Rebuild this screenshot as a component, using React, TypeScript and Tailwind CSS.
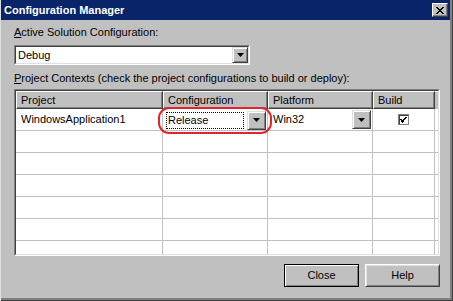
import React from "react";

function DropArrow() {
  return (
    <svg width="7" height="4" viewBox="0 0 7 4">
      <polygon points="0,0 7,0 3.5,4" fill="#000" />
    </svg>
  );
}

function DropButton({ className }: { className: string }) {
  return (
    <div
      className={
        "flex items-center justify-center bg-[#c0c0c0] border border-t-[#dfdfdf] border-l-[#dfdfdf] border-b-[#404040] border-r-[#404040] shadow-[inset_1px_1px_#ffffff,inset_-1px_-1px_#808080] " +
        className
      }
    >
      <DropArrow />
    </div>
  );
}

function CloseGlyph() {
  const rows = [
    [0, 6],
    [1, 5],
    [2, 4],
    [3, 3],
    [2, 4],
    [1, 5],
    [0, 6],
  ];
  return (
    <svg width="8" height="7" viewBox="0 0 8 7" shapeRendering="crispEdges">
      {rows.map(([a, b], i) => (
        <g key={i}>
          <rect x={a} y={i} width="2" height="1" fill="#000" />
          <rect x={b} y={i} width="2" height="1" fill="#000" />
        </g>
      ))}
    </svg>
  );
}

function Sunken({ className, children }: { className: string; children: React.ReactNode }) {
  return (
    <div className={"border border-t-[#808080] border-l-[#808080] border-b-white border-r-white " + className}>
      <div className="w-full h-full border border-t-[#404040] border-l-[#404040] border-b-[#dfdfdf] border-r-[#dfdfdf] bg-white">
        {children}
      </div>
    </div>
  );
}

const headerCell =
  "flex items-center pl-[4px] h-full bg-[#c0c0c0] border border-t-white border-l-white border-b-[#404040] border-r-[#404040] shadow-[inset_-1px_-1px_#808080]";

export default function App() {
  const emptyRows = [0, 1, 2, 3, 4, 5];

  return (
    <div className="relative w-[453px] h-[301px] bg-[#c0c0c0] pl-[1px] pr-[3px] shadow-[inset_1px_0_#dfdfdf,inset_-1px_-1px_#404040,inset_-3px_-3px_#808080] font-['Liberation_Sans',Arial,sans-serif] text-[11px] leading-[13px] text-black overflow-hidden">
      {/* title bar */}
      <div className="h-[20px] bg-[#0a246a] flex items-center pl-[3px] pr-[2px]">
        <span className="font-bold text-white">Configuration Manager</span>
        <div className="ml-auto w-[16px] h-[14px] flex items-center justify-center bg-[#c0c0c0] border border-t-white border-l-white border-b-[#404040] border-r-[#404040] shadow-[inset_-1px_-1px_#808080]">
          <CloseGlyph />
        </div>
      </div>

      <div className="pl-[13px] pr-[10px]">
        <div className="mt-[6px]">
          <span className="underline">A</span>ctive Solution Configuration:
        </div>

        <Sunken className="mt-[6px] w-[236px] h-[20px]">
          <div className="flex h-full items-center">
            <span className="pl-[2px]">Debug</span>
            <DropButton className="ml-auto w-[16px] h-[16px]" />
          </div>
        </Sunken>

        <div className="mt-[7px]">
          <span className="underline">P</span>roject Contexts (check the project configurations to build or deploy):
        </div>

        <Sunken className="mt-[4px] w-[426px] h-[167px]">
          <div className="h-full overflow-hidden">
            <div className="flex h-[18px]">
              <div className={headerCell + " w-[147px]"}>Project</div>
              <div className={headerCell + " w-[105px]"}>Configuration</div>
              <div className={headerCell + " w-[105px]"}>Platform</div>
              <div className={headerCell + " w-[62px]"}>Build</div>
              <div className="flex-1 h-full bg-[#c0c0c0] border-t border-t-white"></div>
            </div>

            <div className="flex h-[22px] border-b border-b-[#c0c0c0]">
              <div className="w-[147px] h-full border-r border-r-[#c0c0c0] flex items-center pl-[5px]">
                WindowsApplication1
              </div>
              <div className="w-[105px] h-full border-r border-r-[#c0c0c0] flex pl-[2px] pt-[1px]">
                <div className="w-[101px] h-[20px] flex items-center bg-white">
                  <div className="ml-[1px] w-[78px] h-[17px] flex items-center pl-[1px] border border-dotted border-black">
                    Release
                  </div>
                  <DropButton className="ml-auto w-[19px] h-[19px]" />
                </div>
              </div>
              <div className="w-[105px] h-full border-r border-r-[#c0c0c0] flex items-center pl-[5px]">
                <span>Win32</span>
                <DropButton className="ml-auto mr-[1px] w-[19px] h-[19px]" />
              </div>
              <div className="w-[62px] h-full border-r border-r-[#c0c0c0] flex items-center justify-center">
                <div className="w-[11px] h-[11px] border border-[#808080] shadow-[inset_1px_1px_#404040] bg-white flex items-center justify-center">
                  <svg width="7" height="7" viewBox="0 0 7 7" shapeRendering="crispEdges">
                    <polyline points="0.5,3 2.5,5.5 6.5,1" fill="none" stroke="#000" strokeWidth="1.6" />
                  </svg>
                </div>
              </div>
              <div className="flex-1" />
            </div>

            {emptyRows.map((r) => (
              <div key={r} className="flex h-[22px] border-b border-b-[#c0c0c0]">
                <div className="w-[147px] h-full border-r border-r-[#c0c0c0]" />
                <div className="w-[105px] h-full border-r border-r-[#c0c0c0]" />
                <div className="w-[105px] h-full border-r border-r-[#c0c0c0]" />
                <div className="w-[62px] h-full border-r border-r-[#c0c0c0]" />
                <div className="flex-1" />
              </div>
            ))}
          </div>
        </Sunken>

        <div className="mt-[8px] flex justify-end gap-[6px]">
          <div className="w-[75px] h-[23px] border border-black bg-[#c0c0c0] shadow-[inset_1px_1px_#ffffff,inset_-1px_-1px_#808080] flex items-center justify-center">
            Close
          </div>
          <div className="w-[75px] h-[23px] border border-t-white border-l-white border-b-[#404040] border-r-[#404040] bg-[#c0c0c0] shadow-[inset_1px_1px_#dfdfdf,inset_-1px_-1px_#808080] flex items-center justify-center">
            Help
          </div>
        </div>
      </div>

      {/* red highlight drawn over the configuration cell */}
      <div className="absolute left-[158px] top-[107px] w-[114px] h-[27px] border-2 border-[#e0252b] rounded-[11px] pointer-events-none" />
    </div>
  );
}
